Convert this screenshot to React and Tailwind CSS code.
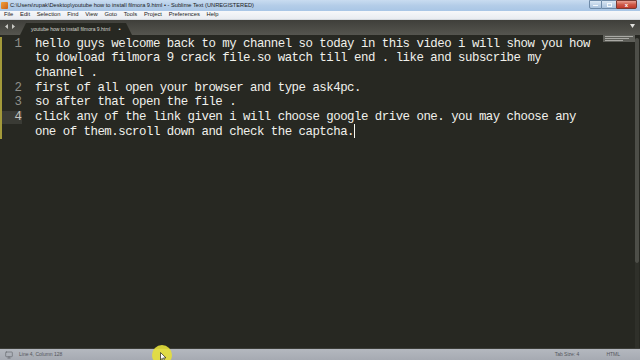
import { Monitor } from 'lucide-react'

const menuItems = ['File', 'Edit', 'Selection', 'Find', 'View', 'Goto', 'Tools', 'Project', 'Preferences', 'Help']

// each visual row: [line number or null, text]
const rows = [
  [1, 'hello guys welcome back to my channel so today in this video i will show you how'],
  [null, 'to dowload filmora 9 crack file.so watch till end . like and subscribe my'],
  [null, 'channel .'],
  [2, 'first of all open your browser and type ask4pc.'],
  [3, 'so after that open the file .'],
  [4, 'click any of the link given i will choose google drive one. you may choose any'],
  [null, 'one of them.scroll down and check the captcha.'],
]

function TitleBar() {
  return (
    <div className="h-[11px] flex items-center bg-gradient-to-b from-[#c9dcf0] via-[#b4cde8] to-[#a9c6e6] relative">
      <div className="w-[7px] h-[7px] ml-[1px] mr-[2px] bg-gradient-to-br from-[#f2a03a] to-[#c8601a] rounded-[1px]" />
      <span className="text-[5.7px] leading-none text-[#1a1a1a] font-['Liberation_Sans',sans-serif] whitespace-nowrap">
        C:\Users\rupak\Desktop\youtube how to install filmora 9.html • - Sublime Text (UNREGISTERED)
      </span>
      <div className="ml-auto flex h-[10px] self-start mr-[3px]">
        <div className="w-[13px] h-[9px] rounded-bl-[2px] border border-[#6e8aa8] bg-gradient-to-b from-[#dbe8f5] to-[#a9c1dc] flex items-end justify-center pb-[2px]">
          <div className="w-[5px] h-[1px] bg-[#f4f8fc]" />
        </div>
        <div className="w-[14px] h-[9px] border-y border-[#6e8aa8] bg-gradient-to-b from-[#dbe8f5] to-[#a9c1dc] flex items-center justify-center">
          <div className="w-[5px] h-[4px] border border-[#f4f8fc]" />
        </div>
        <div className="w-[21px] h-[9px] rounded-br-[2px] border border-[#7a3a32] bg-gradient-to-b from-[#e8a093] via-[#cf5a48] to-[#c0392b] flex items-center justify-center text-white text-[6px] leading-none font-bold font-['Liberation_Sans',sans-serif]">
          x
        </div>
      </div>
    </div>
  )
}

function MenuBar() {
  return (
    <div className="h-[9px] flex items-center gap-[6.7px] pl-[4px] bg-gradient-to-b from-[#f7f8fa] to-[#e9ecf1] border-b border-[#d6dae0] font-['Liberation_Sans',sans-serif] text-[5.8px] leading-none text-[#222]">
      {menuItems.map(m => <span key={m}>{m}</span>)}
    </div>
  )
}

function TabBar() {
  return (
    <div className="h-[15px] flex items-end bg-gradient-to-b from-[#3f3f3a] to-[#55554f] relative">
      <svg className="absolute left-[5px] top-[4px]" width="10" height="5" viewBox="0 0 10 5">
        <path d="M0 2.5 L3 0 L3 5 Z M10 2.5 L7 0 L7 5 Z" fill="#c9c9c4" />
      </svg>
      <div className="ml-[20px] h-[12px] w-[112px] bg-[#272822] [clip-path:polygon(6px_0,calc(100%-6px)_0,100%_100%,0_100%)] flex items-center pl-[11px] font-['Liberation_Sans',sans-serif] text-[5px] leading-none text-[#d8d8d2]">
        youtube how to install filmora 9.html
        <span className="ml-[8px] text-[6px]">•</span>
      </div>
      <svg className="ml-auto mr-[5px] mb-[7px]" width="5" height="4" viewBox="0 0 5 4">
        <path d="M0 0 L5 0 L2.5 4 Z" fill="#e0e0dc" />
      </svg>
    </div>
  )
}

function Editor() {
  return (
    <div className="flex-1 flex bg-[#272822] relative overflow-hidden">
      <div className="flex-1 pt-[1.6px]">
        {rows.map(([num, text], i) => (
          <div key={i} className="flex h-[14.7px] items-center border-l-2 border-[#a39a3a]">
            <div className={`w-[20px] text-right text-[12.4px] font-['Liberation_Mono',monospace] leading-none ${num === 4 ? 'text-[#c8c8c2] bg-[#3a3b35]' : 'text-[#8f908a]'}`}>
              {num ?? ''}
            </div>
            <div className="ml-[13px] text-[12.4px] tracking-[-0.5px] font-['Liberation_Mono',monospace] leading-none text-[#f1f1ec] whitespace-pre relative">
              {text}
              {i === rows.length - 1 && (
                <span className="absolute -right-[1px] top-[-2px] w-[1px] h-[14px] bg-[#f8f8f0]" />
              )}
            </div>
          </div>
        ))}
      </div>
      {/* minimap + scrollbar */}
      <div className="w-[37px] flex">
        <div className="w-[35px] h-[7px] bg-[#5e5f59] flex flex-col gap-[1px] pt-[1px] pl-[2px]">
          <div className="w-[28px] h-[1px] bg-[#a9a9a4]" />
          <div className="w-[24px] h-[1px] bg-[#a9a9a4]" />
          <div className="w-[18px] h-[1px] bg-[#a9a9a4]" />
        </div>
        <div className="ml-auto w-[5px] mr-[1px] flex flex-col">
          <div className="h-[225px] mt-[3px] rounded-[2px] bg-[#4d4e48]" />
          <div className="flex-1 bg-[#2f302a]" />
        </div>
      </div>
    </div>
  )
}

function StatusBar() {
  return (
    <div className="h-[12px] flex items-center bg-gradient-to-b from-[#b4b8bf] to-[#a6aab2] border-t border-[#3c3d38] font-['Liberation_Sans',sans-serif] text-[5px] leading-none text-[#55575c]">
      <Monitor className="w-[8px] h-[8px] ml-[5px] mr-[6px] text-[#666a70]" strokeWidth={2} />
      <span>Line 4, Column 128</span>
      <span className="ml-auto mr-[27px]">Tab Size: 4</span>
      <span className="mr-[20px]">HTML</span>
    </div>
  )
}

export default function App() {
  return (
    <div className="w-[640px] h-[360px] flex flex-col overflow-hidden relative bg-[#272822]">
      <TitleBar />
      <MenuBar />
      <TabBar />
      <Editor />
      <StatusBar />
      {/* click highlight around the mouse pointer */}
      <div className="absolute left-[152px] top-[345px] w-[20px] h-[20px] rounded-full bg-[#e6e03a]/90 flex items-center justify-center">
        <svg width="7" height="10" viewBox="0 0 7 10" className="ml-[3px] mt-[3px]">
          <path d="M0.5 0.5 L0.5 8 L2.3 6.3 L3.6 9.2 L4.7 8.7 L3.5 5.9 L6 5.9 Z" fill="#fff" stroke="#222" strokeWidth="0.7" />
        </svg>
      </div>
    </div>
  )
}
